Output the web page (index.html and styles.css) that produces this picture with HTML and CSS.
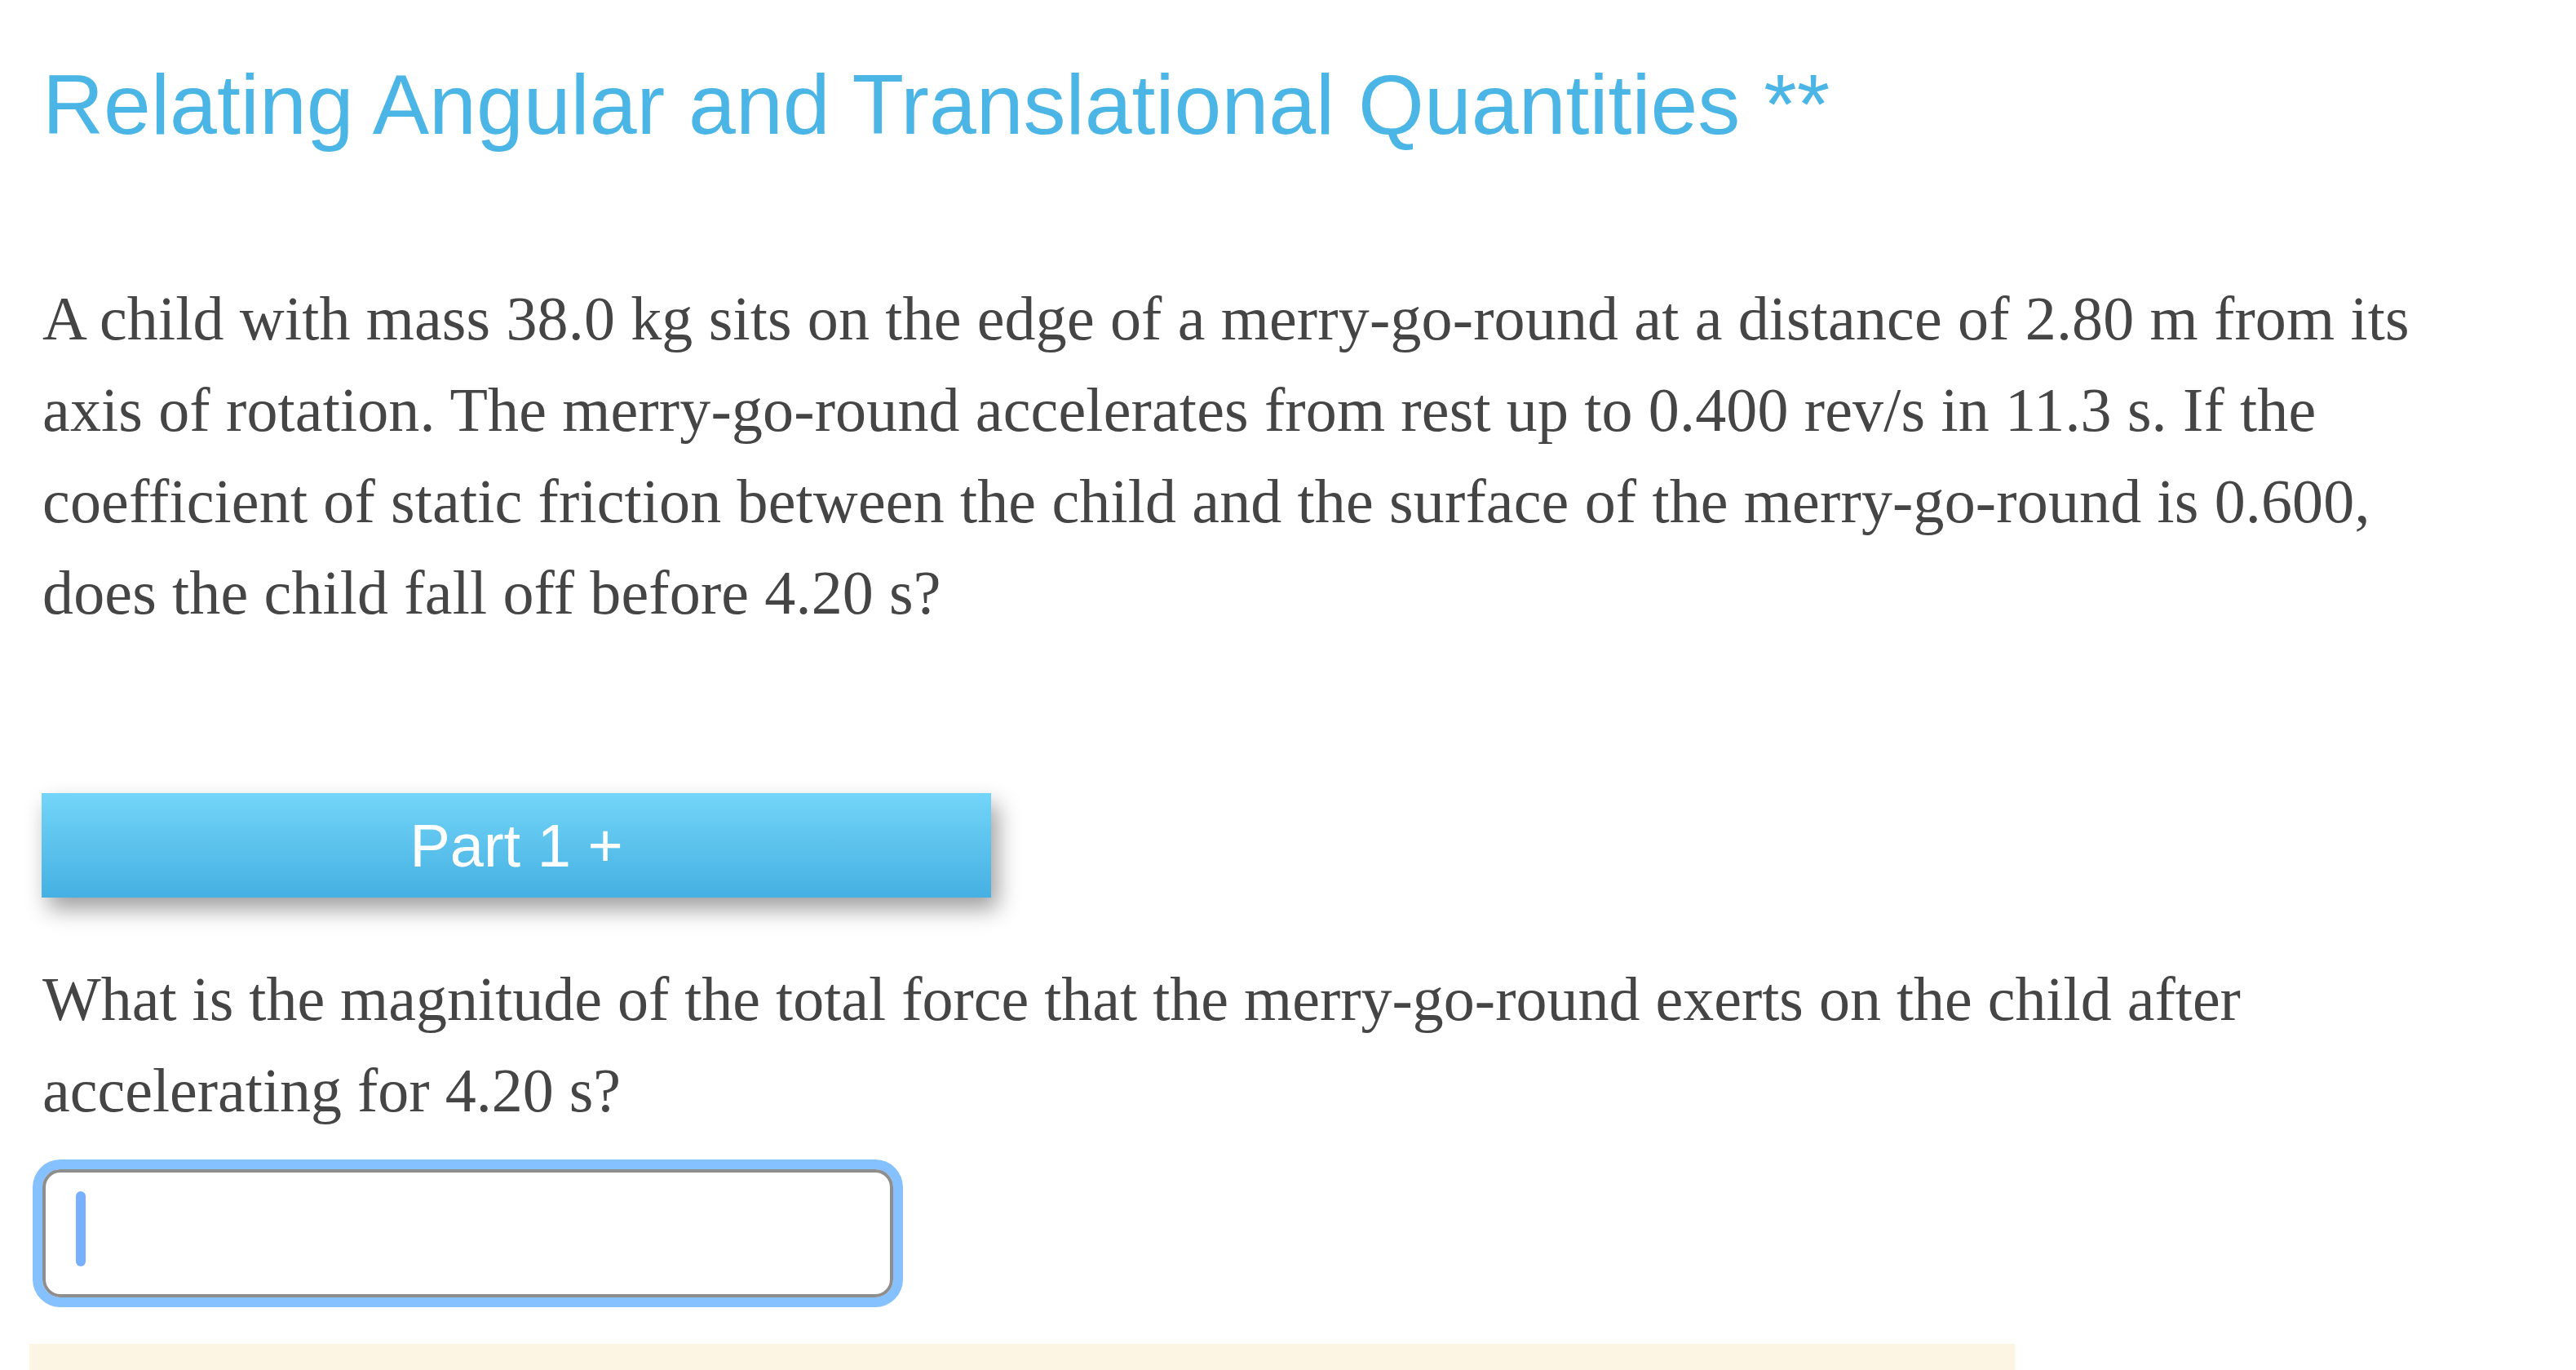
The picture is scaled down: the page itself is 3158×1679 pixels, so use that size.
FILE: index.html
```html
<!DOCTYPE html>
<html lang="en">
<head>
    <meta charset="UTF-8">
    <meta name="viewport" content="width=device-width, initial-scale=1.0">
    <title>Relating Angular and Translational Quantities</title>
    <link rel="stylesheet" href="styles.css">
</head>
<body>
    <div class="page">
        <div class="content">
            <h1 class="title">Relating Angular and Translational Quantities **</h1>

            <p class="problem">A child with mass 38.0 kg sits on the edge of a merry-go-round at a distance of 2.80 m from its axis of rotation. The merry-go-round accelerates from rest up to 0.400 rev/s in 11.3 s. If the coefficient of static friction between the child and the surface of the merry-go-round is 0.600, does the child fall off before 4.20 s?</p>

            <div class="part-button">Part 1 +</div>

            <p class="question">What is the magnitude of the total force that the merry-go-round exerts on the child after accelerating for 4.20 s?</p>

            <div class="answer">
                <span class="caret"></span>
            </div>
        </div>

        <div class="feedback"></div>
    </div>
</body>
</html>
```

FILE: styles.css
```css
body {
    margin: 0;
    background-color: #ffffff;
}

.page {
    padding: 70px 36px 0 36px;
}

.content {
    padding-left: 16px;
    width: 2960px;
}

.title {
    margin: 0;
    font-family: "Liberation Sans", Arial, sans-serif;
    font-size: 104px;
    font-weight: normal;
    line-height: 116px;
    color: #4bb6e5;
}

.problem,
.question {
    margin: 0;
    font-family: "Liberation Serif", "Times New Roman", serif;
    font-size: 76px;
    line-height: 112px;
    color: #454545;
}

.problem {
    margin-top: 148px;
    letter-spacing: 0.15px;
}

.part-button {
    margin: 190px 0 0 -1px;
    width: 1164px;
    height: 128px;
    display: flex;
    align-items: center;
    justify-content: center;
    font-family: "Liberation Sans", Arial, sans-serif;
    font-size: 74px;
    color: #ffffff;
    background: linear-gradient(to bottom, #73d5f8, #45b0e2);
    box-shadow: 8px 14px 26px rgba(0, 0, 0, 0.38);
}

.question {
    margin-top: 68px;
}

.answer {
    margin-top: 41px;
    width: 1043px;
    height: 157px;
    box-sizing: border-box;
    border: 4px solid #8e8e8e;
    border-radius: 22px;
    box-shadow: 0 0 0 12px #85c1fe;
    padding: 23px 0 0 37px;
}

.caret {
    display: block;
    width: 12px;
    height: 92px;
    border-radius: 6px;
    background-color: #78b0fe;
}

.feedback {
    margin-top: 57px;
    width: 2434px;
    height: 60px;
    background-color: #fcf5e3;
}
```
